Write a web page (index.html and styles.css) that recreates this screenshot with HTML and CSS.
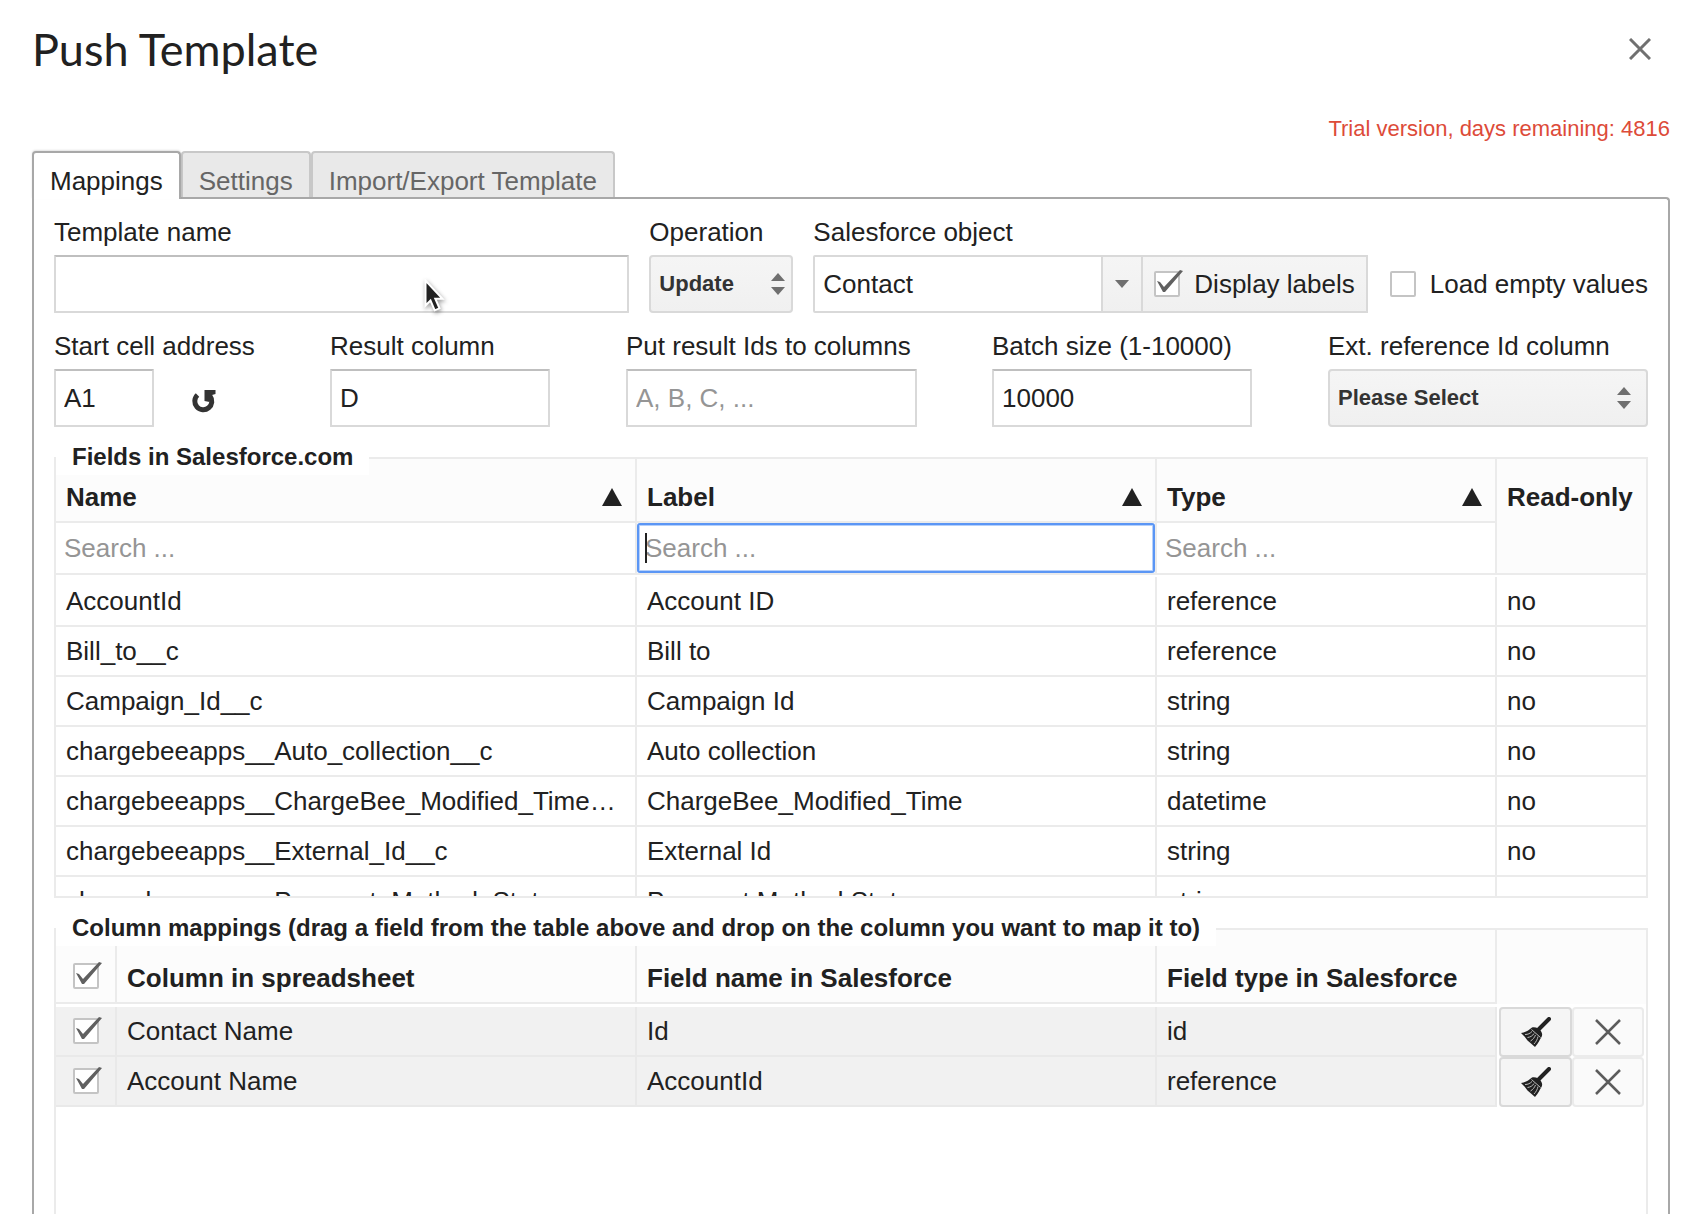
FILE: index.html
```
<!DOCTYPE html>
<html lang="en">
<head>
<meta charset="utf-8">
<title>Push Template</title>
<link rel="stylesheet" href="styles.css">
</head>
<body>
<svg class="sprite" aria-hidden="true">
  <symbol id="updown" viewBox="0 0 14 22"><path d="M7 0l7 8H0zM7 22l7-8H0z" fill="#6f6f6f"/></symbol>
  <symbol id="sort" viewBox="0 0 20 18"><path d="M10 0l10 18H0z" fill="#212121"/></symbol>
  <symbol id="cross" viewBox="0 0 26 26"><path d="M1 1l24 24M25 1L1 25" stroke="#5c5c5c" stroke-width="2.5" fill="none"/></symbol>
  <symbol id="broom" viewBox="0 0 30 30">
    <path d="M28 2L18 12" stroke="#212121" stroke-width="4" stroke-linecap="round"/>
    <path d="M11 10.500c4-.6 7 1 8.500 3s2.300 4 1 6.500c-2 3-3 6-6.500 10L10 26.500 6.500 23.500 3.500 19.500 0 16c4-.5 7.500-2.500 11-5.500z" fill="#212121"/>
    <path d="M10.500 12.500l9 8M4 17.500c3 0 5-1 7-3M6.500 20.500c3-.5 5-1.500 6.500-4M9.500 24c2.500-1.500 4-3.500 5-6M13 27c2-2 3.300-4.500 4-7.500" stroke="#bdbdbd" stroke-width="1" fill="none"/>
  </symbol>
</svg>

<header class="top">
  <h1>Push Template</h1>
  <button class="close" type="button" aria-label="Close">
    <svg width="22" height="22" viewBox="0 0 22 22"><path d="M1 1l20 20M21 1L1 21" stroke="#707070" stroke-width="3"/></svg>
  </button>
</header>

<main class="dialog">
  <p class="trial">Trial version, days remaining: 4816</p>

  <div class="tabs" role="tablist">
    <button class="tab active" type="button" role="tab" aria-selected="true">Mappings</button>
    <button class="tab" type="button" role="tab" aria-selected="false">Settings</button>
    <button class="tab" type="button" role="tab" aria-selected="false">Import/Export Template</button>
  </div>

  <div class="panel" role="tabpanel">
    <form class="form">
      <div class="row">
        <div class="field grow">
          <label for="tname">Template name</label>
          <input class="text" id="tname" type="text">
          <svg class="pointer" width="22" height="34" viewBox="0 0 22 34" aria-hidden="true"><path d="M1.500 1.500v25l5-5 4.200 9.800 4.800-2-4.200-9.600h7.200z" fill="#212121" stroke="#fff" stroke-width="2"/></svg>
        </div>
        <div class="field">
          <label for="op">Operation</label>
          <div class="select w-op">
            <select id="op"><option>Update</option></select>
            <svg class="updown" width="14" height="22"><use href="#updown"/></svg>
          </div>
        </div>
        <div class="field">
          <label for="obj">Salesforce object</label>
          <div class="combo">
            <input class="combo-text" id="obj" type="text" value="Contact">
            <button class="combo-open" type="button" aria-label="Show objects"><svg width="14" height="8" viewBox="0 0 14 8"><path d="M0 0h14L7 8z" fill="#6f6f6f"/></svg></button>
            <label class="tick boxed"><input class="check" type="checkbox" checked>Display labels</label>
          </div>
        </div>
        <label class="tick load"><input class="check" type="checkbox">Load empty values</label>
      </div>

      <div class="row-grid">
        <div class="field">
          <label for="cell">Start cell address</label>
          <div class="inline">
            <input class="text w-cell" id="cell" type="text" value="A1">
            <button class="reload" type="button" aria-label="Refresh columns">
              <svg width="24" height="24" viewBox="0 0 24 24"><path d="M5.500 6a8.500 8.500 0 1 0 12.500 1" fill="none" stroke="#333" stroke-width="5"/><path d="M12.500 1h11v4l-3.500 1-2.500 7-5-1z" fill="#333"/></svg>
            </button>
          </div>
        </div>
        <div class="field">
          <label for="rescol">Result column</label>
          <input class="text w-res" id="rescol" type="text" value="D">
        </div>
        <div class="field">
          <label for="ids">Put result Ids to columns</label>
          <input class="text w-ids" id="ids" type="text" placeholder="A, B, C, ...">
        </div>
        <div class="field">
          <label for="batch">Batch size (1-10000)</label>
          <input class="text w-batch" id="batch" type="text" value="10000">
        </div>
        <div class="field">
          <label for="ext">Ext. reference Id column</label>
          <div class="select wide">
            <select id="ext"><option>Please Select</option></select>
            <svg class="updown" width="14" height="22"><use href="#updown"/></svg>
          </div>
        </div>
      </div>
    </form>

    <section class="group">
      <h2>Fields in Salesforce.com</h2>
      <div class="scroll">
        <table class="grid fields">
          <colgroup><col><col class="c-label"><col class="c-type"><col class="c-last"></colgroup>
          <thead>
            <tr>
              <th><button class="sort" type="button">Name<svg width="20" height="18"><use href="#sort"/></svg></button></th>
              <th><button class="sort" type="button">Label<svg width="20" height="18"><use href="#sort"/></svg></button></th>
              <th><button class="sort" type="button">Type<svg width="20" height="18"><use href="#sort"/></svg></button></th>
              <th rowspan="2">Read-only</th>
            </tr>
            <tr class="filters">
              <td><input class="search" type="text" placeholder="Search ..." aria-label="Search name"></td>
              <td><div class="focus-wrap"><input class="search focused" type="text" placeholder="Search ..." aria-label="Search label"><span class="caret"></span></div></td>
              <td><input class="search" type="text" placeholder="Search ..." aria-label="Search type"></td>
            </tr>
          </thead>
          <tbody>
            <tr><td>AccountId</td><td>Account ID</td><td>reference</td><td>no</td></tr>
            <tr><td>Bill_to__c</td><td>Bill to</td><td>reference</td><td>no</td></tr>
            <tr><td>Campaign_Id__c</td><td>Campaign Id</td><td>string</td><td>no</td></tr>
            <tr><td>chargebeeapps__Auto_collection__c</td><td>Auto collection</td><td>string</td><td>no</td></tr>
            <tr><td>chargebeeapps__ChargeBee_Modified_Time__c</td><td>ChargeBee_Modified_Time</td><td>datetime</td><td>no</td></tr>
            <tr><td>chargebeeapps__External_Id__c</td><td>External Id</td><td>string</td><td>no</td></tr>
            <tr><td>chargebeeapps__Payment_Method_Status__c</td><td>Payment Method Status</td><td>string</td><td>no</td></tr>
          </tbody>
        </table>
      </div>
    </section>

    <section class="group fill">
      <h2>Column mappings (drag a field from the table above and drop on the column you want to map it to)</h2>
      <table class="grid mappings">
        <colgroup><col class="c-check"><col><col class="c-label"><col class="c-type"><col class="c-last"></colgroup>
        <thead>
          <tr>
            <th class="tick-cell"><input class="check" type="checkbox" checked aria-label="Select all columns"></th>
            <th>Column in spreadsheet</th>
            <th>Field name in Salesforce</th>
            <th>Field type in Salesforce</th>
            <td class="blank"></td>
          </tr>
        </thead>
        <tbody>
          <tr>
            <td class="tick-cell"><input class="check" type="checkbox" checked aria-label="Contact Name"></td>
            <td>Contact Name</td><td>Id</td><td>id</td>
            <td class="actions"><div class="buttons"><button class="act" type="button" aria-label="Clear mapping"><svg width="30" height="30"><use href="#broom"/></svg></button><button class="act light" type="button" aria-label="Delete mapping"><svg width="26" height="26"><use href="#cross"/></svg></button></div></td>
          </tr>
          <tr>
            <td class="tick-cell"><input class="check" type="checkbox" checked aria-label="Account Name"></td>
            <td>Account Name</td><td>AccountId</td><td>reference</td>
            <td class="actions"><div class="buttons"><button class="act" type="button" aria-label="Clear mapping"><svg width="30" height="30"><use href="#broom"/></svg></button><button class="act light" type="button" aria-label="Delete mapping"><svg width="26" height="26"><use href="#cross"/></svg></button></div></td>
          </tr>
        </tbody>
      </table>
    </section>
  </div>
</main>
</body>
</html>
```
FILE: styles.css
```
* { box-sizing: border-box; }

body {
  margin: 0;
  min-height: 100vh;
  display: flex;
  flex-direction: column;
  background: #fff;
  color: #212121;
  font: 26px/30px "Liberation Sans", Arial, sans-serif;
}

button, input, select { font: inherit; color: inherit; margin: 0; }
button { cursor: pointer; }
svg { display: block; }
.sprite { position: absolute; width: 0; height: 0; }

.top {
  display: flex;
  justify-content: space-between;
  align-items: center;
  padding: 22px 31px 0 32px;
}
h1 {
  margin: 0;
  font: 400 45px/54px Lato, "Open Sans", sans-serif;
}
.close { padding: 8px; border: 0; background: none; }

.dialog {
  flex: 1;
  display: flex;
  flex-direction: column;
  padding: 40px 20px 0 32px;
}
.trial {
  margin: 0 0 9px;
  text-align: right;
  font-size: 22px;
  line-height: 26px;
  color: #dd4b39;
}

.tabs { display: flex; align-items: flex-start; }
.tab {
  padding: 13px 16px 1px;
  border: 2px solid #c8c8c8;
  border-bottom: 0;
  border-radius: 4px 4px 0 0;
  background: #e9e9e9;
  color: #666;
}
.tab.active {
  position: relative;
  margin-bottom: -2px;
  padding-bottom: 3px;
  border-color: #a8a8a8;
  background: #fff;
  color: #212121;
  box-shadow: 0 -1px 2px rgba(0, 0, 0, .12);
}

.panel {
  flex: 1;
  display: flex;
  flex-direction: column;
  gap: 30px;
  padding: 18px 20px 0;
  border: 2px solid #a8a8a8;
  border-bottom: 0;
  border-radius: 0 4px 0 0;
}

.form { display: flex; flex-direction: column; gap: 18px; }
.row { display: flex; align-items: flex-end; gap: 20px; }
.row-grid { display: grid; grid-template-columns: 276fr 296fr 366fr 336fr 320fr; }
.field { position: relative; display: flex; flex-direction: column; align-items: flex-start; gap: 8px; min-width: 0; }
.grow { flex: 1; }
.grow .text { width: 100%; }
.inline { display: flex; align-items: center; }

.text {
  height: 58px;
  padding: 0 8px;
  border: 2px solid #d9d9d9;
  border-top-color: #bfbfbf;
  border-radius: 1px;
  background: #fff;
}
::placeholder { color: #959595; opacity: 1; }
.w-cell { width: 100px; }
.w-res { width: 220px; }
.w-ids { width: 291px; }
.w-batch { width: 260px; }
.w-op { width: 144px; }
.reload { margin: 5px 0 0 32px; padding: 6px; border: 0; background: none; }

.pointer { position: absolute; left: 370px; top: 62px; filter: drop-shadow(1px 2px 2px rgba(0, 0, 0, .4)); }

.select { position: relative; }
.select.wide { width: 100%; }
.select select {
  appearance: none;
  width: 100%;
  height: 58px;
  padding: 0 8px;
  border: 2px solid #d9d9d9;
  border-radius: 4px;
  background: linear-gradient(#f5f5f5, #f0f0f0);
  color: #333;
  font-size: 22px;
  font-weight: bold;
}
.updown { position: absolute; right: 8px; top: 18px; pointer-events: none; }
.wide .updown { right: 17px; }

.combo { display: flex; height: 58px; }
.combo-text {
  width: 290px;
  padding: 0 8px;
  border: 2px solid #d9d9d9;
  border-radius: 2px 0 0 2px;
  background: #fff;
}
.combo-open {
  width: 38px;
  padding: 0;
  border: solid #d9d9d9;
  border-width: 2px 0;
  background: linear-gradient(#f5f5f5, #f0f0f0);
}
.combo-open svg { margin: auto; }
.tick { display: flex; align-items: center; gap: 14px; height: 58px; white-space: nowrap; }
.tick.boxed { padding: 0 11px; border: 2px solid #d9d9d9; background: linear-gradient(#f5f5f5, #f0f0f0); }
.tick.load { padding-left: 2px; }

.check {
  appearance: none;
  position: relative;
  flex: none;
  display: block;
  width: 26px;
  height: 26px;
  border: 2px solid #c4c4c4;
  border-radius: 2px;
  background: #fff;
}
.check:checked::after {
  content: "";
  position: absolute;
  left: -2px;
  top: -4px;
  width: 30px;
  height: 26px;
  background: url("data:image/svg+xml,%3Csvg xmlns='http://www.w3.org/2000/svg' viewBox='0 0 30 26'%3E%3Cpath d='M3 12l3 1 4 5L26 1l3 1-18 21H9z' fill='%23606060'/%3E%3C/svg%3E");
}

.group { position: relative; border: 2px solid #ebebeb; }
.group.fill { flex: 1; border-bottom: 0; }
h2 {
  position: absolute;
  left: 0;
  top: -16px;
  margin: 0;
  padding: 0 16px 4px;
  background: #fff;
  font-size: 24px;
  line-height: 28px;
}
.scroll { max-height: 437px; overflow: hidden; }

.grid { width: 100%; table-layout: fixed; border-spacing: 0; }
.c-label { width: 520px; }
.c-type { width: 340px; }
.c-last { width: 149px; }
.c-check { width: 61px; }
.grid th, .grid td {
  padding: 9px 10px;
  border: solid #ebebeb;
  border-width: 0 2px 2px 0;
  text-align: left;
  white-space: nowrap;
  overflow: hidden;
  text-overflow: ellipsis;
}
.grid tr > :last-child { border-right: 0; }
.grid .filters > :last-child { border-right: 2px solid #ebebeb; }
.grid th { padding-top: 23px; background: #fcfcfc; vertical-align: top; }
.grid tbody::before { content: ""; display: table-row; height: 2px; }
.grid.mappings tbody::before { height: 3px; }
.grid .filters td { padding: 0; }

.sort {
  display: flex;
  justify-content: space-between;
  align-items: center;
  width: 100%;
  padding: 0 3px 0 0;
  border: 0;
  background: none;
  font-weight: bold;
}

.search {
  display: block;
  width: 100%;
  height: 50px;
  padding: 0 6px;
  border: 2px solid transparent;
  background: none;
}
.search.focused { border-color: #5b96f5; border-radius: 3px; box-shadow: inset 0 0 0 1px #b5d0fb; }
.focus-wrap { position: relative; }
.caret { position: absolute; left: 8px; top: 10px; width: 2px; height: 30px; background: #212121; }

.grid.mappings th { padding-top: 33px; }
.mappings .blank { border: 0; background: #fcfcfc; }
.mappings tbody td { background: #f1f1f1; border-color: #e9e9e9; }
.mappings .tick-cell { padding-left: 17px; overflow: visible; }
.grid.mappings tbody .actions { padding: 0 2px; border: 0; background: #fff; }
.buttons { display: flex; }
.act {
  display: flex;
  align-items: center;
  justify-content: center;
  width: 74px;
  height: 50px;
  padding: 0;
  border: 2px solid #d9d9d9;
  border-radius: 4px;
  background: #f5f5f5;
}
.act.light { width: 73px; border-color: #ebebeb; background: #fafafa; }
```
